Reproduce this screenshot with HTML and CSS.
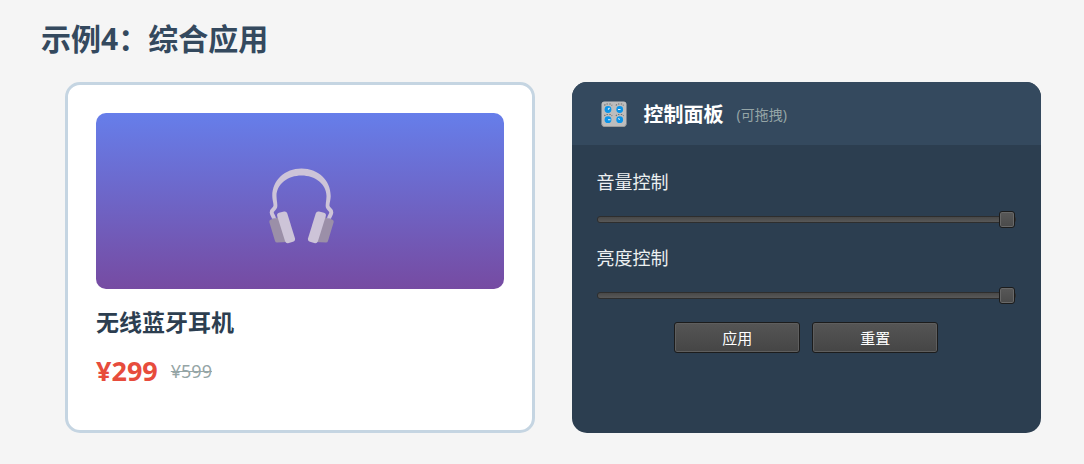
FILE: index.html
```html
<!DOCTYPE html>
<html lang="zh-CN">
<head>
<meta charset="UTF-8">
<meta name="viewport" content="width=device-width, initial-scale=1.0">
<title>示例4：综合应用</title>
<link rel="stylesheet" href="styles.css">
</head>
<body>

<h1 class="page-title">示例4：综合应用</h1>

<div class="demo-grid">
  <section class="product-card">
    <div class="product-image">
      <svg class="headphones" viewBox="0 0 66 76" role="img" aria-label="耳机">
        <path d="M0.300 54 Q0 52 2 51.500 L10 49 L19 74 L8 74.500 Q6.500 74.500 6 73Z" fill="#9b8fa8"/>
        <path d="M64.700 54 Q65 52 63 51.500 L55 49 L46 74 L57 74.500 Q58.500 74.500 59 73Z" fill="#9b8fa8"/>
        <path d="M4 39 C5.500 37 3.300 33 3.300 28 C3.300 12 16 0.500 32.500 0.500 C49 0.500 61.700 12 61.700 28 C61.700 33 59.500 37 61 39 L57 40 C56 37 57.500 33 57.500 28 C57.500 16 46 7.500 32.500 7.500 C19 7.500 7.500 16 7.500 28 C7.500 33 9 37 8 40Z" fill="#cdc4d8"/>
        <path d="M6 38 C7 41 2.500 41 2.700 44.500 C2.800 47 4.500 47.500 5 50.500" fill="none" stroke="#cdc4d8" stroke-width="4"/>
        <path d="M59 38 C58 41 62.500 41 62.300 44.500 C62.200 47 60.500 47.500 60 50.500" fill="none" stroke="#cdc4d8" stroke-width="4"/>
        <path d="M8.200 48 Q7.500 45.500 10 44.700 L15 43.500 Q17.500 43 18.300 45.500 L26 70.500 Q26.500 73 24 73.800 L19 75.200 Q17 75.500 16 73Z" fill="#cdc4d8"/>
        <path d="M56.800 48 Q57.500 45.500 55 44.700 L50 43.500 Q47.500 43 46.700 45.500 L39 70.500 Q38.500 73 41 73.800 L46 75.200 Q48 75.500 49 73Z" fill="#cdc4d8"/>
      </svg>
    </div>
    <h2 class="product-name">无线蓝牙耳机</h2>
    <div class="product-price">
      <span class="price">¥299</span>
      <del class="old-price">¥599</del>
    </div>
  </section>

  <section class="control-panel">
    <header class="panel-header">
      <svg class="panel-icon" viewBox="0 0 26 26" aria-hidden="true">
        <rect x="0.500" y="0.500" width="25" height="25" rx="3" fill="#bdbdbd"/>
        <path d="M1 23 Q1 25.500 3 25.500 H23 Q25 25.500 25 23" fill="none" stroke="#9b9b9b"/>
        <g fill="none" stroke="#707070" stroke-width="1.200" stroke-dasharray="1.400 1.400">
          <path d="M3.500 4.500 L4.500 3 H10 L11 4.500"/>
          <path d="M15 4.500 L16 3 H21.500 L22.500 4.500"/>
          <path d="M3.500 15 L4.500 13.500 H10 L11 15"/>
          <path d="M15 15 L16 13.500 H21.500 L22.500 15"/>
        </g>
        <g fill="#0b94e8">
          <circle cx="7" cy="8.500" r="3.400"/>
          <circle cx="18.700" cy="8.500" r="3.400"/>
          <circle cx="7" cy="18.700" r="3.400"/>
          <circle cx="18.700" cy="18.700" r="3.400"/>
        </g>
        <path d="M7 8.500 L8.500 7 M17 8.500 H19.500 M7 18.700 H9.500 M18.700 18.700 L17.300 17.300" stroke="#e4f4ff" stroke-width="1.100"/>
      </svg>
      <h2 class="panel-title">控制面板</h2>
      <span class="panel-hint">(可拖拽)</span>
    </header>
    <form class="panel-body">
      <div class="control">
        <label for="volume">音量控制</label>
        <input type="range" id="volume" name="volume" min="0" max="100" value="100">
      </div>
      <div class="control">
        <label for="brightness">亮度控制</label>
        <input type="range" id="brightness" name="brightness" min="0" max="100" value="100">
      </div>
      <div class="panel-actions">
        <button type="button">应用</button>
        <button type="reset">重置</button>
      </div>
    </form>
  </section>
</div>

</body>
</html>
```

FILE: styles.css
```css
* {
  box-sizing: border-box;
}
body {
  margin: 0;
  padding: 18px 43px 30px 41px;
  background-color: #f5f5f5;
  font-family: "Noto Sans", "Noto Sans CJK SC", sans-serif;
}
h1,
h2 {
  margin: 0;
}
.page-title {
  margin-bottom: 22px;
  color: #34495e;
  font-size: 30px;
  line-height: 42px;
}
.demo-grid {
  display: grid;
  grid-template-columns: 1fr 1fr;
  gap: 37px;
  padding-left: 24px;
}

/* product card */
.product-card {
  padding: 28px 28px 44px;
  background-color: #fff;
  border: 3px solid #c5d5e2;
  border-radius: 15px;
}
.product-image {
  display: flex;
  align-items: center;
  justify-content: center;
  height: 176px;
  padding: 10px 0 0 4px;
  border-radius: 10px;
  background: linear-gradient(#667eea, #764ba2);
}
.headphones {
  width: 66px;
  height: 76px;
}
.product-name {
  margin: 17px 0 18px;
  color: #2c3e50;
  font-size: 23px;
  line-height: 32px;
}
.product-price {
  display: flex;
  align-items: center;
  gap: 13px;
  line-height: 30px;
}
.price {
  color: #e74c3c;
  font-size: 27px;
  font-weight: bold;
}
.old-price {
  color: #95a5a6;
  font-size: 18px;
}

/* control panel */
.control-panel {
  overflow: hidden;
  background-color: #2c3e50;
  border-radius: 15px;
}
.panel-header {
  display: flex;
  align-items: center;
  height: 63px;
  padding: 0 29px;
  background-color: #34495e;
}
.panel-icon {
  width: 26px;
  height: 26px;
  margin-right: 17px;
}
.panel-title {
  margin-right: 13px;
  color: #fff;
  font-size: 20px;
}
.panel-hint {
  color: #95a5a6;
  font-size: 14px;
}
.panel-body {
  padding: 25px;
}
.control {
  margin-bottom: 18px;
}
.control label {
  display: block;
  margin-bottom: 17px;
  color: #ecf0f1;
  font-size: 18px;
  line-height: 24px;
}
.control input {
  display: block;
  width: 100%;
  height: 17px;
  margin: 0;
  background: none;
  appearance: none;
}
.control input::-webkit-slider-runnable-track {
  height: 7px;
  background: linear-gradient(#484848, #585858);
  border: 1px solid #2e2e2e;
  border-radius: 3px;
}
.control input::-webkit-slider-thumb {
  width: 16px;
  height: 17px;
  margin-top: -6px;
  background: linear-gradient(#585858, #4a4a4a);
  border: 1px solid #1c1c1c;
  border-radius: 3px;
  box-shadow: inset 0 0 0 1px #686868;
  appearance: none;
}
.panel-actions {
  display: flex;
  justify-content: center;
  gap: 12px;
}
.panel-actions button {
  width: 126px;
  height: 31px;
  padding: 0;
  color: #fff;
  font-family: inherit;
  font-size: 15px;
  background: linear-gradient(#555, #454545);
  border: 1px solid #1c1c1c;
  border-radius: 3px;
  box-shadow: inset 0 0 0 1px #5e5e5e;
  cursor: pointer;
}
```
